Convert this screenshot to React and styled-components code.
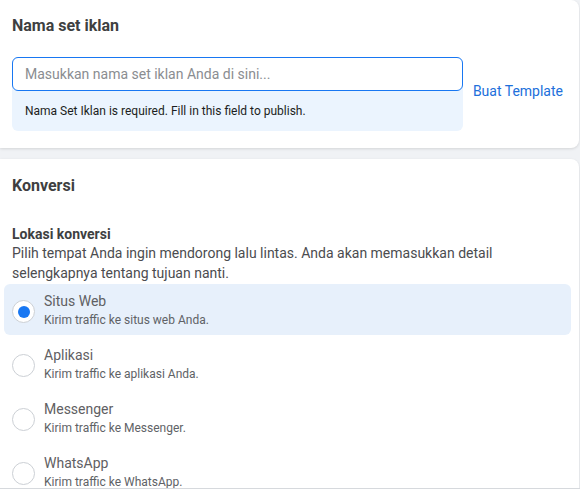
import React from 'react';
import styled, { createGlobalStyle } from 'styled-components';

const GlobalStyle = createGlobalStyle`
  html, body {
    margin: 0;
    padding: 0;
    background: #f0f2f5;
    font-family: Roboto, "Liberation Sans", Arial, sans-serif;
  }
  * {
    box-sizing: border-box;
  }
`;

const Page = styled.div`
  height: 489px;
  overflow: hidden;
  display: flex;
  flex-direction: column;
  gap: 11px;
  padding-right: 1px;
  border-bottom: 1px solid #d6d9dd;
`;

const Card = styled.section`
  background: #fff;
  border-radius: 0 8px 8px 0;
  box-shadow: 0 1px 3px rgba(0, 0, 0, 0.12);
  padding: ${(p) => p.$padding};
  flex-shrink: 0;
`;

const Title = styled.h2`
  margin: 0;
  font-size: 16px;
  line-height: 20px;
  font-weight: 700;
  color: #3e3f41;
`;

const FieldRow = styled.div`
  display: flex;
  align-items: center;
  gap: 10px;
  margin-top: 21px;
`;

const Field = styled.div`
  width: 451px;
  background: #ebf4fe;
  border-radius: 6px;
`;

const Input = styled.input`
  display: block;
  width: 100%;
  height: 34px;
  border: 1px solid #1877f2;
  border-radius: 6px;
  background: #fff;
  padding: 0 12px;
  font-family: inherit;
  font-size: 14px;
  color: #1c1e21;
  outline: none;

  &::placeholder {
    color: #8a8d91;
  }
`;

const Helper = styled.div`
  padding: 12px 13px;
  font-size: 12px;
  line-height: 16px;
  color: #1c1e21;
`;

const LinkButton = styled.a`
  font-size: 14px;
  color: #216fdb;
  text-decoration: none;
  white-space: nowrap;
  cursor: pointer;
  margin-top: -6px;
`;

const SubTitle = styled.h3`
  margin: 28px 0 0;
  font-size: 14px;
  line-height: 20px;
  font-weight: 700;
  color: #3e3f41;
`;

const Description = styled.p`
  margin: 0;
  font-size: 14px;
  line-height: 19.5px;
  color: #4b4c4f;
`;

const Options = styled.div`
  display: flex;
  flex-direction: column;
  gap: 3px;
  margin: 1px -8px 0;
`;

const Option = styled.label`
  display: flex;
  align-items: center;
  gap: 9px;
  height: 51px;
  padding: 0 8px;
  border-radius: 6px;
  background: ${(p) => (p.$selected ? '#e7f0fb' : 'transparent')};
  cursor: pointer;
`;

const Radio = styled.span`
  width: 23px;
  height: 23px;
  border-radius: 50%;
  border: 1px solid #ccd0d5;
  background: #fff;
  display: flex;
  align-items: center;
  justify-content: center;
  flex-shrink: 0;
  margin-top: 4px;

  &::after {
    content: '';
    width: 12px;
    height: 12px;
    border-radius: 50%;
    background: ${(p) => (p.$checked ? '#1877f2' : 'transparent')};
  }
`;

const OptionText = styled.div`
  display: flex;
  flex-direction: column;
  gap: 2px;
`;

const OptionLabel = styled.span`
  font-size: 14px;
  line-height: 18px;
  color: #5f6063;
`;

const OptionSub = styled.span`
  font-size: 12px;
  line-height: 16px;
  color: #606266;
`;

const options = [
  { label: 'Situs Web', sub: 'Kirim traffic ke situs web Anda.' },
  { label: 'Aplikasi', sub: 'Kirim traffic ke aplikasi Anda.' },
  { label: 'Messenger', sub: 'Kirim traffic ke Messenger.' },
  { label: 'WhatsApp', sub: 'Kirim traffic ke WhatsApp.' },
];

const App = () => {
  const [selected, setSelected] = React.useState(0);

  return (
    <>
      <GlobalStyle />
      <Page>
        <Card $padding="16px 16px 17px 12px">
          <Title>Nama set iklan</Title>
          <FieldRow>
            <Field>
              <Input placeholder="Masukkan nama set iklan Anda di sini..." />
              <Helper>Nama Set Iklan is required. Fill in this field to publish.</Helper>
            </Field>
            <LinkButton>Buat Template</LinkButton>
          </FieldRow>
        </Card>
        <Card $padding="17px 16px 20px 12px">
          <Title>Konversi</Title>
          <SubTitle>Lokasi konversi</SubTitle>
          <Description>
            Pilih tempat Anda ingin mendorong lalu lintas. Anda akan memasukkan detail
            selengkapnya tentang tujuan nanti.
          </Description>
          <Options>
            {options.map((o, i) => (
              <Option key={o.label} $selected={selected === i} onClick={() => setSelected(i)}>
                <Radio $checked={selected === i} />
                <OptionText>
                  <OptionLabel>{o.label}</OptionLabel>
                  <OptionSub>{o.sub}</OptionSub>
                </OptionText>
              </Option>
            ))}
          </Options>
        </Card>
      </Page>
    </>
  );
};

export default App;
